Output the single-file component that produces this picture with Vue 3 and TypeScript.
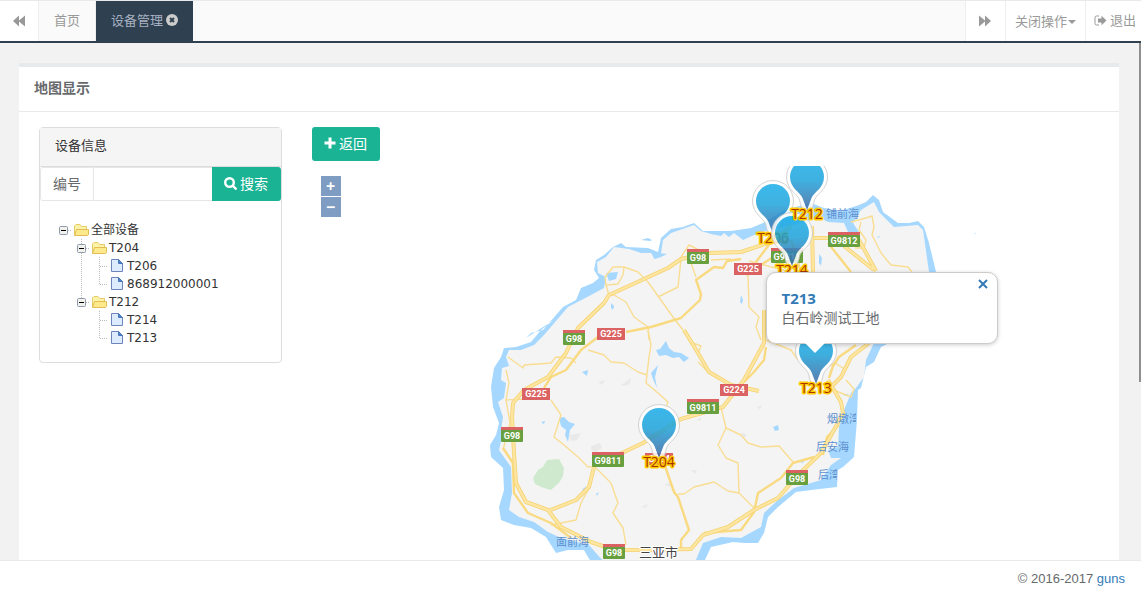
<script setup lang="ts">
import { ref } from 'vue'

type Slot = 'root' | 'open' | 'openLast' | 'line' | 'blank' | 'tee' | 'end'

interface TreeRow {
  label: string
  icon: 'folder' | 'file'
  slots: Slot[]
}

interface Shield {
  name: string
  x: number
  y: number
  kind: 'green' | 'red'
}

interface Pin {
  name: string
  x: number
  y: number
}

const code = ref('')

const rows: TreeRow[] = [
  { label: '全部设备', icon: 'folder', slots: ['root'] },
  { label: 'T204', icon: 'folder', slots: ['blank', 'open'] },
  { label: 'T206', icon: 'file', slots: ['blank', 'line', 'tee'] },
  { label: '868912000001', icon: 'file', slots: ['blank', 'line', 'end'] },
  { label: 'T212', icon: 'folder', slots: ['blank', 'openLast'] },
  { label: 'T214', icon: 'file', slots: ['blank', 'blank', 'tee'] },
  { label: 'T213', icon: 'file', slots: ['blank', 'blank', 'end'] },
]

const isSwitch = (s: Slot) => s === 'root' || s === 'open' || s === 'openLast'

const slotLines: Record<Slot, string> = {
  root: 'M14 9.5H18',
  open: 'M9.5 0V5M9.5 14V18M14 9.5H18',
  openLast: 'M9.5 0V5M14 9.5H18',
  line: 'M9.5 0V18',
  blank: '',
  tee: 'M9.5 0V18M10 9.5H18',
  end: 'M9.5 0V9M10 9.5H18',
}

const water =
  'M553 320L540 330 530 342 515 347 503 348 500 357 493 368 490 387 492 407 498 423 495 435 489 445 490 457 502 468 503 490 498 507 500 520 513 525 530 528 545 537 555 553 567 550 583 550 590 562 703 562 710 547 732 542 743 543 757 543 763 533 767 517 777 507 795 492 810 490 836 487 837 470 842 467 853 457 856 420 857 390 860 388 865 367 873 362 880 347 888 343 935 272 928 243 923 227 917 221 908 223 897 223 882 212 878 200 872 195 865 202 858 205 840 211 823 208 810 203 783 210 762 223 750 228 730 231 702 231 693 223 682 227 670 229 660 238 657 252 647 248 625 247 620 243 612 247 603 255 595 260 593 270 598 278 592 283 580 288 575 300 562 307 542 330 530 333 525 338Z'

const land =
  'M567 307L543 335 533 345 520 350 508 350 505 357 508 366 501 368 500 380 505 383 503 398 497 402 502 417 500 430 501 437 498 450 510 467 511 493 508 510 518 517 533 522 547 532 560 538 588 545 595 553 603 562 694 562 702 543 720 537 740 538 760 527 763 513 777 500 793 488 810 483 820 480 830 465 840 458 830 458 827 450 837 447 838 427 843 410 850 393 855 388 863 377 865 360 872 345 928 272 922 230 917 225 893 227 878 212 873 202 860 210 852 223 858 232 850 239 847 232 843 223 827 222 817 217 800 223 760 232 742 240 733 233 728 237 723 233 720 236 710 234 700 231 693 225 670 233 662 240 660 253 653 259 651 253 640 253 628 249 613 247 605 257 596 262 597 273 605 277 603 288 590 295Z'

const lakes = [
  'M655 350L659 349 665 341 668 348 673 352 680 353 688 358 683 362 678 357 672 358 665 355 658 356Z',
  'M650 373L657 365 654 377 656 388 652 379Z',
  'M558 418L563 417 568 422 574 424 569 430 567 442 564 435 565 430 560 426Z',
  'M605 273L617 272 615 279 608 281Z',
  'M610 303l3 3-1 4-2-2z',
  'M740 295l2 5-1 4-2-2z',
  'M772 427l5-2 1 5-4 1z',
  'M581 372l6-2-1 6z',
  'M540 422l4-1-1 3z',
  'M650 253l8 0 8 1-6 3-6 2z',
  'M640 240l7-2 4 2-2 1z',
  'M838 391l4 3 6 0-4 2z',
  'M796 461l8-2-2 4z',
  'M743 539l10-3 7 0-5 5z',
  'M876 237l4-1-3 2z',
  'M973 233l2 0-1 1z',
  'M581 490l4-4-2 5z',
  'M595 494l3-2-2 4z',
  'M818 254l3 4-1 8-2-3z',
]

const patches = [
  'M590 446l9-3 2 5-6 4-5-2z',
  'M620 385l10-7-1 6-6 2z',
  'M568 435l12-2-4 7-6 1z',
  'M640 507l7-3-2 4z',
  'M663 485l8-3-1 5z',
  'M756 407l5-2-2 5z',
  'M695 420l5-3 0 4z',
  'M690 470l6 0-2 4z',
  'M740 432l6 3-3 3z',
  'M597 382l7-2-3 5z',
]

const minorRoads = [
  'M507 357L522 368 523 365 550 363 555 357 570 358 575 363',
  'M587 350L603 355 610 362 623 363 637 372 646 375',
  'M647 330L650 345 648 357 645 383 657 393 667 402 664 410',
  'M550 400L560 415 553 437 563 445 577 457 587 467 597 466',
  'M595 468L610 483 617 503 612 513 622 528 625 545',
  'M550 525L575 520 580 503 588 488',
  'M505 370L508 383 505 400 509 423 502 450',
  'M505 400L523 399',
  'M677 494L683 494 693 487 713 482 727 491 738 493 753 508',
  'M720 407L725 428 717 445 725 458 737 463 738 493',
  'M725 428L740 435 747 443 760 447 778 446 792 462',
  'M608 295L605 285 604 277 612 267 623 267 622 275 617 284 606 285',
  'M623 267L637 272 647 282 672 317 682 330',
  'M608 295L613 295 625 302 633 317 647 327 648 340',
  'M680 259L677 287 667 292 657 297',
  'M680 257L688 245 698 250M690 263L695 277',
  'M747 275L748 307 758 317 755 327 760 340',
  'M850 222L865 218 871 216 873 227 871 235 880 253 890 265 907 267 911 272',
  'M860 222L858 230 865 240 863 248 854 248',
  'M697 353L700 346 692 343M707 372L697 362',
  'M835 391L850 397 853 389 845 380M828 366L834 363 845 370',
  'M748 261L790 272M730 259L710 260M765 340L790 350 797 360',
]

const midRoads = [
  'M625 332L650 327 680 318 699 300 700 294 695 280 713 267 722 268 726 261 740 259',
  'M597 337L580 350 565 370 550 377 543 388',
  'M502 448L512 463 513 493 527 513 550 523 570 538',
  'M663 463L673 492 677 497 688 530 680 540 680 550',
  'M813 457L792 463 780 478 757 493 753 512 740 530 703 533',
  'M765 347L763 360 752 373 740 385',
  'M827 243L850 272M770 242L755 262M775 255L745 275M790 240L800 272',
  'M855 345L838 357 832 366 828 378',
  'M822 455L826 437 838 425',
]

const mainRoads = [
  'M813 238H828M858 240L875 271M843 246L873 270M811 226L812 272',
  'M790 226L770 242 740 252 708 253 680 259 667 268 630 285 608 295 603 303 577 328 565 353 547 377 523 390 512 403 511 417 513 453 515 483 525 502 547 510 560 527 590 542 613 550 640 550 690 549 702 535 727 527 753 510 777 498 797 475 820 453 833 430 842 413 840 402 827 380',
  'M830 387L840 377 850 357 868 343',
  'M763 310V343L743 380 722 407 680 419 642 443 623 452 594 463 588 487 575 500 547 511',
  'M683 330L697 353 708 372 730 385 758 391',
]

const shields: Shield[] = [
  { name: 'G98', x: 697, y: 257, kind: 'green' },
  { name: 'G98', x: 573, y: 338, kind: 'green' },
  { name: 'G98', x: 511, y: 435, kind: 'green' },
  { name: 'G98', x: 613, y: 552, kind: 'green' },
  { name: 'G98', x: 796, y: 478, kind: 'green' },
  { name: 'G9811', x: 607, y: 460, kind: 'green' },
  { name: 'G9811', x: 702, y: 407, kind: 'green' },
  { name: 'G9811', x: 786, y: 256, kind: 'green' },
  { name: 'G9812', x: 843, y: 240, kind: 'green' },
  { name: 'G225', x: 747, y: 269, kind: 'red' },
  { name: 'G225', x: 610, y: 334, kind: 'red' },
  { name: 'G225', x: 535, y: 394, kind: 'red' },
  { name: 'G224', x: 733, y: 390, kind: 'red' },
  { name: 'G224', x: 658, y: 459, kind: 'red' },
]

const shieldWidth = (s: Shield) => (s.name.length === 3 ? 22 : s.name.length === 4 ? 28 : 32)

const pins: Pin[] = [
  { name: 'T204', x: 658, y: 458 },
  { name: 'T206', x: 772, y: 234 },
  { name: 'T213', x: 815, y: 384 },
  { name: 'T214', x: 791, y: 266 },
  { name: 'T212', x: 806, y: 210 },
]
</script>

<template>
  <div class="page">
    <header class="tabs">
      <button class="nav back" type="button" aria-label="向左">
        <svg width="14" height="12" viewBox="0 0 14 12"><path d="M7 0.5V5.5L13 0.5V11.5L7 6.5V11.5L1 6Z" /></svg>
      </button>
      <nav class="tab-list">
        <a class="tab" href="#home">首页</a>
        <a class="tab active" href="#device">
          设备管理
          <svg width="12" height="12" viewBox="0 0 12 12">
            <circle cx="6" cy="6" r="6" /><path d="M4 4L8 8M8 4L4 8" />
          </svg>
        </a>
      </nav>
      <button class="nav forward" type="button" aria-label="向右">
        <svg width="14" height="12" viewBox="0 0 14 12"><path d="M7 0.5V5.5L1 0.5V11.5L7 6.5V11.5L13 6Z" /></svg>
      </button>
      <button class="nav menu" type="button">关闭操作<span class="caret"></span></button>
      <a class="nav exit" href="#logout">
        <svg width="13" height="11" viewBox="0 0 13 11">
          <path d="M5 1H2.500Q1 1 1 2.500V8.500Q1 10 2.500 10H5" class="stroke" />
          <path d="M4 3.500H7.500V0.800L12.500 5.500L7.500 10.200V7.500H4Z" />
        </svg>
        退出
      </a>
    </header>

    <div class="body">
      <main class="scroller">
        <section class="card">
          <h5 class="card-title">地图显示</h5>
          <div class="row">
            <div class="side">
              <div class="panel">
                <div class="panel-head">设备信息</div>
                <form class="search" @submit.prevent>
                  <label for="code">编号</label>
                  <input id="code" v-model="code" type="text" />
                  <button type="submit">
                    <svg width="13" height="13" viewBox="0 0 13 13">
                      <circle cx="5.500" cy="5.500" r="4.300" /><path d="M8.700 8.700L12.500 12.500" />
                    </svg>
                    搜索
                  </button>
                </form>
                <ul class="tree">
                  <li v-for="row in rows" :key="row.label">
                    <svg v-for="(s, i) in row.slots" :key="i" width="18" height="18" viewBox="0 0 18 18">
                      <path v-if="s !== 'blank'" :d="slotLines[s]" class="dots" />
                      <template v-if="isSwitch(s)">
                        <rect x="5.500" y="5.500" width="8" height="8" rx="1" class="switch" />
                        <path d="M7 9.500H12" class="minus" />
                      </template>
                    </svg>
                    <svg v-if="row.icon === 'folder'" class="icon" width="16" height="16" viewBox="0 0 16 16">
                      <path d="M1.500 13V4L3 2.500H7L8.500 4.500H13.500V7.500" class="folder-back" />
                      <path d="M1.500 13.500L3.500 7.500H15.500V12.500L14.500 13.500Z" class="folder-front" />
                    </svg>
                    <svg v-else class="icon" width="16" height="16" viewBox="0 0 16 16">
                      <path d="M2.500 1.500H9.500L13.500 5.500V13.500H2.500Z" class="file" />
                      <path d="M9.500 1.500V5.500H13.500Z" class="fold" />
                    </svg>
                    <a href="#node">{{ row.label }}</a>
                  </li>
                </ul>
              </div>
            </div>

            <div class="content">
              <button class="return" type="button">
                <svg width="12" height="12" viewBox="0 0 12 12"><path d="M4.500 0.500h3v4h4v3h-4v4h-3v-4h-4v-3h4z" /></svg>
                返回
              </button>
              <div class="map">
                <svg class="canvas" width="788" height="450" viewBox="311 166 788 450">
                  <defs>
                    <linearGradient id="pinFill" x1="0" y1="0" x2="0" y2="1">
                      <stop offset="0" stop-color="#17ace8" />
                      <stop offset="0.4" stop-color="#1ba3dc" />
                      <stop offset="1" stop-color="#3f659f" />
                    </linearGradient>
                    <clipPath id="tileEast"><rect x="800" y="400" width="55" height="60" /></clipPath>
                    <clipPath id="tileSouth"><rect x="800" y="460" width="36" height="30" /></clipPath>
                  </defs>
                  <path :d="water" class="water" />
                  <path :d="land" class="land" />
                  <path d="M532 478L537 470 542 467 546 460 558 459 563 468 562 476 558 483 550 490 540 487 534 484Z" class="park" />
                  <path v-for="d in patches" :key="d" :d="d" class="patch" />
                  <path v-for="d in lakes" :key="d" :d="d" class="water" />
                  <path v-for="d in minorRoads" :key="d" :d="d" class="road minor" />
                  <path v-for="d in midRoads" :key="d" :d="d" class="road mid" />
                  <path v-for="d in mainRoads" :key="d" :d="d" class="road edge" />
                  <path v-for="d in mainRoads" :key="d + 'c'" :d="d" class="road core" />
                  <g v-for="(s, i) in shields" :key="i">
                    <rect
                      v-if="s.kind === 'green'"
                      :x="s.x - shieldWidth(s) / 2" :y="s.y - 8" :width="shieldWidth(s)" height="15" rx="1" class="green"
                    />
                    <rect
                      :x="s.x - shieldWidth(s) / 2" :y="s.kind === 'green' ? s.y - 8 : s.y - 6"
                      :width="shieldWidth(s)" :height="s.kind === 'green' ? 3 : 12" class="red"
                    />
                    <text :x="s.x" :y="s.kind === 'green' ? s.y + 4 : s.y + 3" class="shield">{{ s.name }}</text>
                  </g>
                  <text x="825" y="218" class="sea">铺前海</text>
                  <text x="826" y="423" class="sea" clip-path="url(#tileEast)">烟墩湾</text>
                  <text x="815" y="451" class="sea">后安海</text>
                  <text x="817" y="479" class="sea" clip-path="url(#tileSouth)">后湾</text>
                  <text x="555" y="546" class="sea">面前海</text>
                  <text x="638" y="557" class="city">三亚市</text>
                  <g v-for="p in pins" :key="p.name">
                    <g :transform="`translate(${p.x} ${p.y})`" class="pin">
                      <path d="M-5 0L-7.500 -10C-9 -16 -20.500 -20 -20.500 -33A20.500 20.500 0 0 1 20.500 -33C20.500 -20 9 -16 7.500 -10L5 0Z" class="halo" />
                      <path d="M0 0L-4.500 -12C-7 -18 -17 -22 -17 -33A17 17 0 0 1 17 -33C17 -22 7 -18 4.500 -12Z" class="drop" />
                    </g>
                    <text :x="p.x" :y="p.y + 9" class="pin-label">{{ p.name }}</text>
                  </g>
                </svg>
                <div class="zoom">
                  <button type="button" aria-label="放大">+</button>
                  <button type="button" aria-label="缩小">−</button>
                </div>
                <div class="popup">
                  <button class="close" type="button" aria-label="关闭">
                    <svg width="10" height="10" viewBox="0 0 10 10"><path d="M1 1L9 9M9 1L1 9" /></svg>
                  </button>
                  <a href="#T213">T213</a>
                  <p>白石岭测试工地</p>
                </div>
              </div>
            </div>
          </div>
        </section>
      </main>
      <div class="thumb"></div>
    </div>

    <footer>© 2016-2017 <a href="#guns">guns</a></footer>
  </div>
</template>

<style>
body {
  margin: 0;
}
</style>

<style scoped>
* {
  box-sizing: border-box;
}
a {
  text-decoration: none;
}
button {
  font-family: inherit;
  border: 0;
  padding: 0;
  cursor: pointer;
}
.page {
  display: flex;
  flex-direction: column;
  height: 100vh;
  background: #f2f2f2;
  color: #676a6c;
  font: 13px/20px "Open Sans", "Noto Sans CJK SC", sans-serif;
}
.tabs {
  display: flex;
  flex: none;
  height: 43px;
  border-top: 1px solid #e7eaec;
  border-bottom: 2px solid #2f4050;
  background: #fafafa;
}
.nav {
  display: flex;
  align-items: center;
  justify-content: center;
  flex: none;
  width: 40px;
  padding-bottom: 2px;
  background: #fff;
  color: #999;
  font-size: 13px;
  border-left: 1px solid #eee;
}
.nav svg {
  fill: #999;
}
.nav.back {
  width: 39px;
  padding-bottom: 0;
  border-left: 0;
  border-right: 1px solid #eee;
}
.nav.forward {
  padding-bottom: 0;
  padding-right: 2px;
}
.nav.menu {
  width: 80px;
}
.nav.exit {
  width: 56px;
  gap: 3px;
  justify-content: flex-end;
  padding-right: 5px;
}
.nav .stroke {
  fill: none;
  stroke: #999;
}
.caret {
  border: 4px solid transparent;
  border-top-color: #999;
  border-bottom: 0;
  margin-left: 1px;
  margin-top: 4px;
}
.tab-list {
  display: flex;
  flex: 1;
}
.tab {
  display: flex;
  align-items: center;
  gap: 3px;
  padding: 0 15px 2px;
  border-right: 1px solid #eee;
  color: #999;
}
.tab.active {
  background: #2f4050;
  color: #a7b1c2;
  border-right: 0;
}
.tab circle {
  fill: #ccc;
}
.tab path {
  stroke: #2f4050;
  stroke-width: 2;
}
.body {
  position: relative;
  flex: 1;
  min-height: 0;
}
.scroller {
  height: 100%;
  padding: 20px 22px 0 19px;
  overflow-y: auto;
  scrollbar-width: none;
}
.thumb {
  position: absolute;
  top: 0;
  right: 0;
  width: 2px;
  height: 65.6%;
  background: #8f8f8f;
}
.card {
  border-top: 4px solid #e7eaec;
  background: #fff;
}
.card-title {
  margin: 0;
  padding: 11px 15px 13px;
  border-bottom: 1px solid #e7eaec;
  font-size: 14px;
  font-weight: 700;
}
.row {
  display: flex;
  padding: 15px 5px 0;
}
.side {
  width: 25%;
  padding: 0 15px;
}
.content {
  width: 75%;
  padding: 0 15px;
}
.panel {
  border: 1px solid #ddd;
  border-radius: 4px;
}
.panel-head {
  padding: 7px 15px 11px;
  border-bottom: 1px solid #ddd;
  background: #f5f5f5;
  color: #333;
}
.search {
  display: flex;
  height: 34px;
  font-size: 14px;
}
.search label {
  display: flex;
  align-items: center;
  padding: 0 12px;
  border: 1px solid #e5e6e7;
  border-radius: 3px 0 0 3px;
}
.search input {
  flex: 1;
  min-width: 0;
  border: 1px solid #e5e6e7;
  border-left: 0;
  border-right: 0;
  font-size: 14px;
}
.search button,
.return {
  display: flex;
  align-items: center;
  justify-content: center;
  gap: 3px;
  height: 34px;
  padding-bottom: 2px;
  background: #1ab394;
  color: #fff;
  font-size: 14px;
}
.search button {
  width: 69px;
  border-radius: 0 3px 3px 0;
}
.search svg {
  fill: none;
  stroke: #fff;
  stroke-width: 2.4;
}
.return {
  width: 68px;
  border-radius: 3px;
  margin-bottom: 5px;
}
.return svg {
  fill: #fff;
}
.tree {
  margin: 0;
  padding: 20px 14px 15px;
  list-style: none;
  font: 12px/18px "DejaVu Sans", "Noto Sans CJK SC", sans-serif;
}
.tree li {
  display: flex;
  align-items: center;
  height: 18px;
}
.tree a {
  color: #333;
}
.icon {
  margin: 0 2px 0 1px;
}
.dots {
  fill: none;
  stroke: #bbb;
  stroke-dasharray: 1 1;
}
.switch {
  fill: #f3f1ec;
  stroke: #8d9bb0;
}
.minus {
  stroke: #000;
}
.folder-back {
  fill: #fdf3a8;
  stroke: #e5cb66;
}
.folder-front {
  fill: #fbe98c;
  stroke: #e2bd55;
}
.file {
  fill: #dcebfd;
  stroke: #6c86bd;
}
.fold {
  fill: #4d86ce;
  stroke: #4a77bb;
}
.map {
  position: relative;
  overflow: hidden;
}
.canvas {
  display: block;
}
.water {
  fill: #a6d8ff;
}
.land {
  fill: #f4f4f4;
}
.park {
  fill: #cfe9cf;
}
.patch {
  fill: #e9e9e9;
}
.road {
  fill: none;
  stroke-linejoin: round;
}
.minor {
  stroke: #f9dd93;
  stroke-width: 1.4;
}
.mid {
  stroke: #f9da80;
  stroke-width: 2.4;
}
.edge {
  stroke: #f6d274;
  stroke-width: 4;
}
.core {
  stroke: #fde6a0;
  stroke-width: 2.4;
}
.green {
  fill: #69a03f;
}
.red {
  fill: #da6262;
}
.shield {
  fill: #fff;
  font: 700 9px Roboto, sans-serif;
  text-anchor: middle;
}
.sea {
  fill: #5d8fce;
  font: 11px "Noto Sans CJK SC", sans-serif;
}
.city {
  fill: #444;
  stroke: #fff;
  stroke-width: 2;
  paint-order: stroke;
  font: 13px "Noto Sans CJK SC", sans-serif;
}
.pin {
  opacity: 0.84;
}
.halo {
  fill: #fff;
  stroke: #ccc;
}
.drop {
  fill: url(#pinFill);
}
.pin-label {
  fill: #a30;
  stroke: #fc0;
  stroke-width: 3;
  stroke-linejoin: round;
  paint-order: stroke;
  font: 14px "Open Sans", sans-serif;
  text-anchor: middle;
}
.zoom {
  position: absolute;
  top: 10px;
  left: 9px;
  display: grid;
  gap: 1px;
}
.zoom button {
  width: 20px;
  height: 20px;
  background: #7f9dc3;
  color: #fff;
  font: 700 16px/18px "Open Sans", sans-serif;
}
.popup {
  position: absolute;
  top: 106px;
  left: 454px;
  width: 232px;
  height: 72px;
  padding: 15px;
  border: 1px solid #ccc;
  border-radius: 10px;
  background: #fff;
  box-shadow: 0 1px 4px rgba(0, 0, 0, 0.2);
  font-size: 14px;
}
.popup::after {
  content: "";
  position: absolute;
  top: 100%;
  left: 38px;
  border: 10px solid transparent;
  border-top-color: #fff;
  border-bottom: 0;
}
.popup a {
  display: block;
  color: #337ab7;
  font-size: 15px;
  font-weight: 700;
}
.popup p {
  margin: 0;
}
.close {
  position: absolute;
  top: 6px;
  right: 9px;
  display: flex;
  background: none;
}
.close path {
  stroke: #337ab7;
  stroke-width: 2;
}
footer {
  flex: none;
  height: 35px;
  padding: 8px 16px;
  border-top: 1px solid #e7eaec;
  background: #fff;
  text-align: right;
  font-family: "Liberation Sans", sans-serif;
}
footer a {
  color: #337ab7;
}
</style>
